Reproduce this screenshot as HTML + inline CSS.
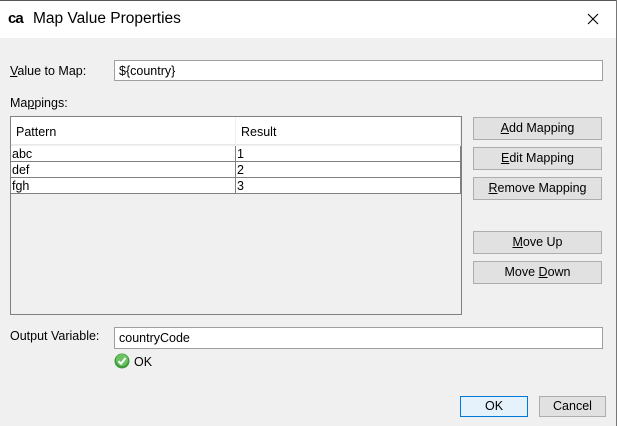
<!DOCTYPE html>
<html><head><style>
*{margin:0;padding:0;box-sizing:border-box}
body{width:617px;height:426px;background:#f0f0f0;font-family:"Liberation Sans",sans-serif;font-size:12.5px;color:#000;position:relative;overflow:hidden}
.a{position:absolute}
.inp{position:absolute;background:#fff;border:1px solid #a0a0a0;padding-left:4px;line-height:20px}
.btn{position:absolute;background:#e1e1e1;border:1px solid #adadad;text-align:center;line-height:21px}
u{text-decoration:underline}
.row{position:absolute;left:11px;width:450px;height:16px;background:#fff;border-bottom:1px solid #808080;line-height:16px}
.row span{position:absolute}
</style></head><body>
<div class="a" style="left:0;top:0;width:617px;height:38px;background:#fff;border-top:1px solid #555"></div>
<div class="a" style="left:8px;top:10px;font-weight:bold;font-size:15px;letter-spacing:-1px">ca</div>
<div class="a" style="left:33px;top:10px;font-size:15.5px">Map Value Properties</div>
<svg class="a" style="left:587px;top:13px" width="12" height="12"><path d="M1 1L11 11M11 1L1 11" stroke="#000" stroke-width="1.1"/></svg>
<div class="a" style="right:0;top:0;width:1px;height:426px;background:#777"></div>

<div class="a" style="left:10px;top:64px"><u>V</u>alue to Map:</div>
<div class="inp" style="left:114px;top:60px;width:489px;height:21px">${country}</div>
<div class="a" style="left:10px;top:96px">Ma<u>p</u>pings:</div>

<div class="a" style="left:10px;top:116px;width:452px;height:199px;border:1px solid #808080;background:#f0f0f0"></div>
<div class="a" style="left:11px;top:117px;width:449px;height:28px;background:#fff;border-bottom:1px solid #e8e8e8"></div>
<div class="a" style="left:235px;top:117px;width:1px;height:28px;background:#f0f0f0"></div>
<div class="a" style="left:16px;top:125px">Pattern</div>
<div class="a" style="left:241px;top:125px">Result</div>
<div class="row" style="top:146px"><span style="left:1px">abc</span><span style="left:226px">1</span></div>
<div class="row" style="top:162px"><span style="left:1px">def</span><span style="left:226px">2</span></div>
<div class="row" style="top:178px"><span style="left:1px">fgh</span><span style="left:226px">3</span></div>
<div class="a" style="left:235px;top:146px;width:1px;height:48px;background:#808080"></div>
<div class="a" style="left:460px;top:146px;width:1px;height:48px;background:#808080"></div>

<div class="btn" style="left:473px;top:117px;width:129px;height:23px"><u>A</u>dd Mapping</div>
<div class="btn" style="left:473px;top:147px;width:129px;height:23px"><u>E</u>dit Mapping</div>
<div class="btn" style="left:473px;top:177px;width:129px;height:23px"><u>R</u>emove Mapping</div>
<div class="btn" style="left:473px;top:231px;width:129px;height:23px"><u>M</u>ove Up</div>
<div class="btn" style="left:473px;top:261px;width:129px;height:23px">Move <u>D</u>own</div>

<div class="a" style="left:10px;top:329px">Output Variable:</div>
<div class="inp" style="left:114px;top:327px;width:489px;height:22px">countryCode</div>
<svg class="a" style="left:114px;top:353px" width="16" height="16"><circle cx="8" cy="8" r="7.5" fill="#3e9a3a"/><circle cx="8" cy="7" r="6" fill="#6cc262"/><path d="M4.5 8.2L7 10.6L11.6 5" stroke="#fff" stroke-width="2" fill="none"/></svg>
<div class="a" style="left:134px;top:355px">OK</div>

<div class="btn" style="left:460px;top:396px;width:68px;height:21px;border:1px solid #0078d7;background:#e5f1fb;line-height:19px">OK</div>
<div class="btn" style="left:539px;top:396px;width:67px;height:21px;line-height:19px">Cancel</div>
</body></html>
